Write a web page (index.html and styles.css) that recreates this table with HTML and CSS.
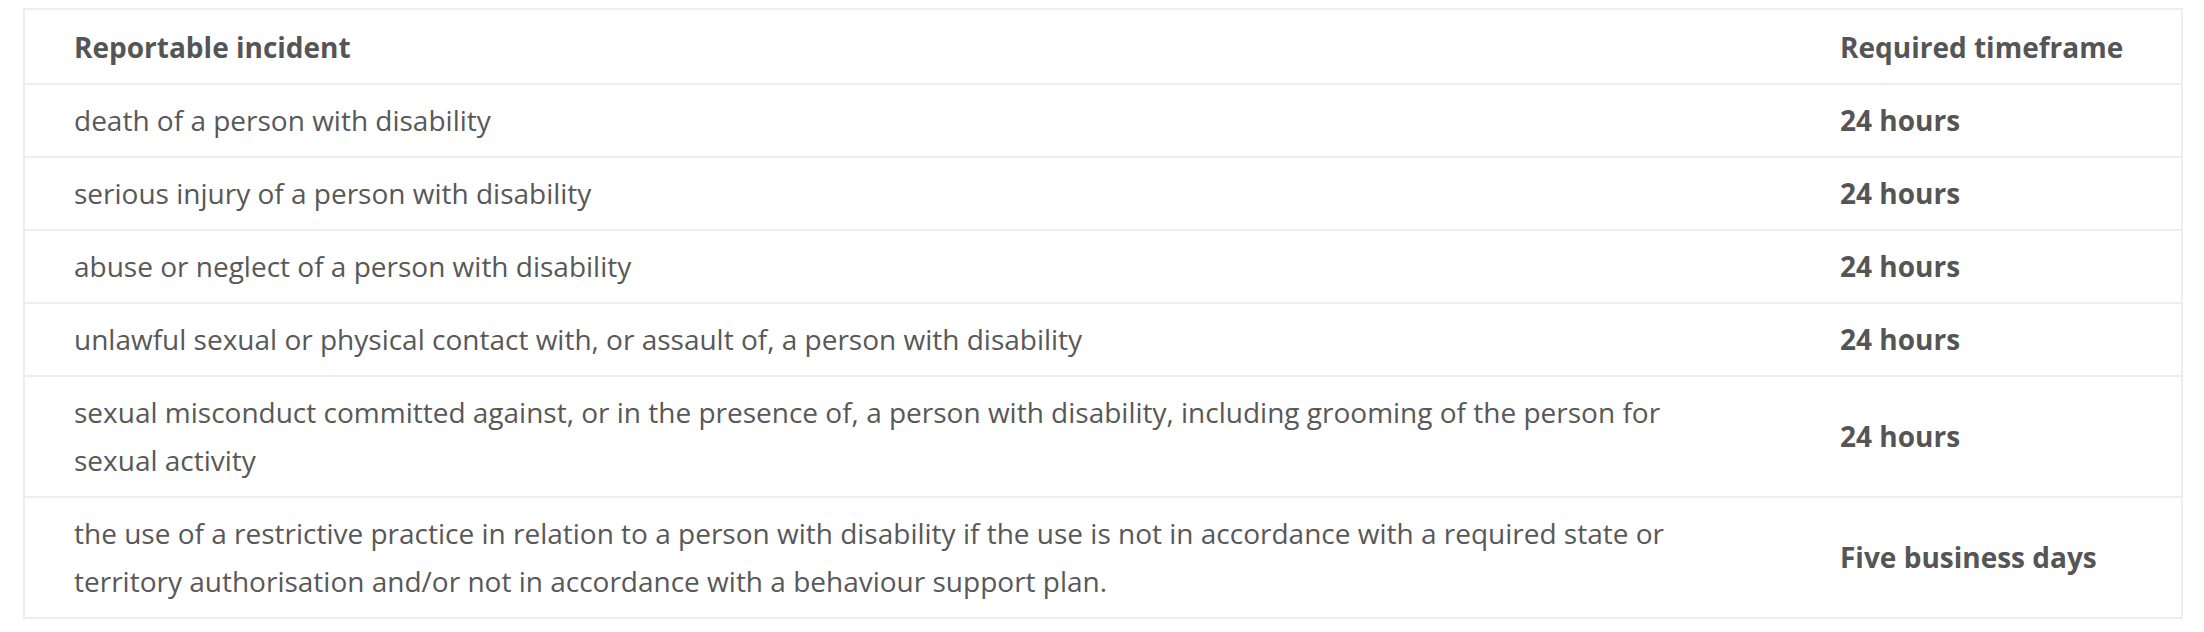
FILE: index.html
```html
<!DOCTYPE html>
<html lang="en">
<head>
<meta charset="utf-8">
<title>Reportable incidents</title>
<link rel="stylesheet" href="styles.css">
</head>
<body>
<div class="page">
<table class="incidents">
  <thead>
    <tr>
      <th class="col-incident">Reportable incident</th>
      <th class="col-time">Required timeframe</th>
    </tr>
  </thead>
  <tbody>
    <tr>
      <td>death of a person with disability</td>
      <td class="time">24 hours</td>
    </tr>
    <tr>
      <td>serious injury of a person with disability</td>
      <td class="time">24 hours</td>
    </tr>
    <tr>
      <td>abuse or neglect of a person with disability</td>
      <td class="time">24 hours</td>
    </tr>
    <tr>
      <td>unlawful sexual or physical contact with, or assault of, a person with disability</td>
      <td class="time">24 hours</td>
    </tr>
    <tr>
      <td>sexual misconduct committed against, or in the presence of, a person with disability, including grooming of the person for sexual activity</td>
      <td class="time">24 hours</td>
    </tr>
    <tr>
      <td>the use of a restrictive practice in relation to a person with disability if the use is not in accordance with a required state or territory authorisation and/or not in accordance with a behaviour support plan.</td>
      <td class="time">Five business days</td>
    </tr>
  </tbody>
</table>
</div>
</body>
</html>
```
FILE: styles.css
```css
html, body {
  margin: 0;
  padding: 0;
  background: #ffffff;
}

.page {
  padding: 8px 21px 0 23px;
}

.incidents {
  width: 2160px;
  border-collapse: collapse;
  table-layout: fixed;
  font-family: "Open Sans", "Liberation Sans", sans-serif;
  font-size: 28px;
  line-height: 48px;
  color: #585858;
  border: 2px solid #eeeeee;
}

.incidents th,
.incidents td {
  border-top: 2px solid #eeeeee;
  border-bottom: 2px solid #eeeeee;
  padding: 11.5px 50px 11.5px 49px;
  text-align: left;
  vertical-align: middle;
}

.incidents th {
  padding-top: 12.5px;
  padding-bottom: 12px;
  font-weight: 700;
  color: #555555;
}

.col-incident {
  width: 1667px;
}

.col-time {
  width: auto;
}

.incidents td.time {
  font-weight: 700;
  color: #555555;
}
```
